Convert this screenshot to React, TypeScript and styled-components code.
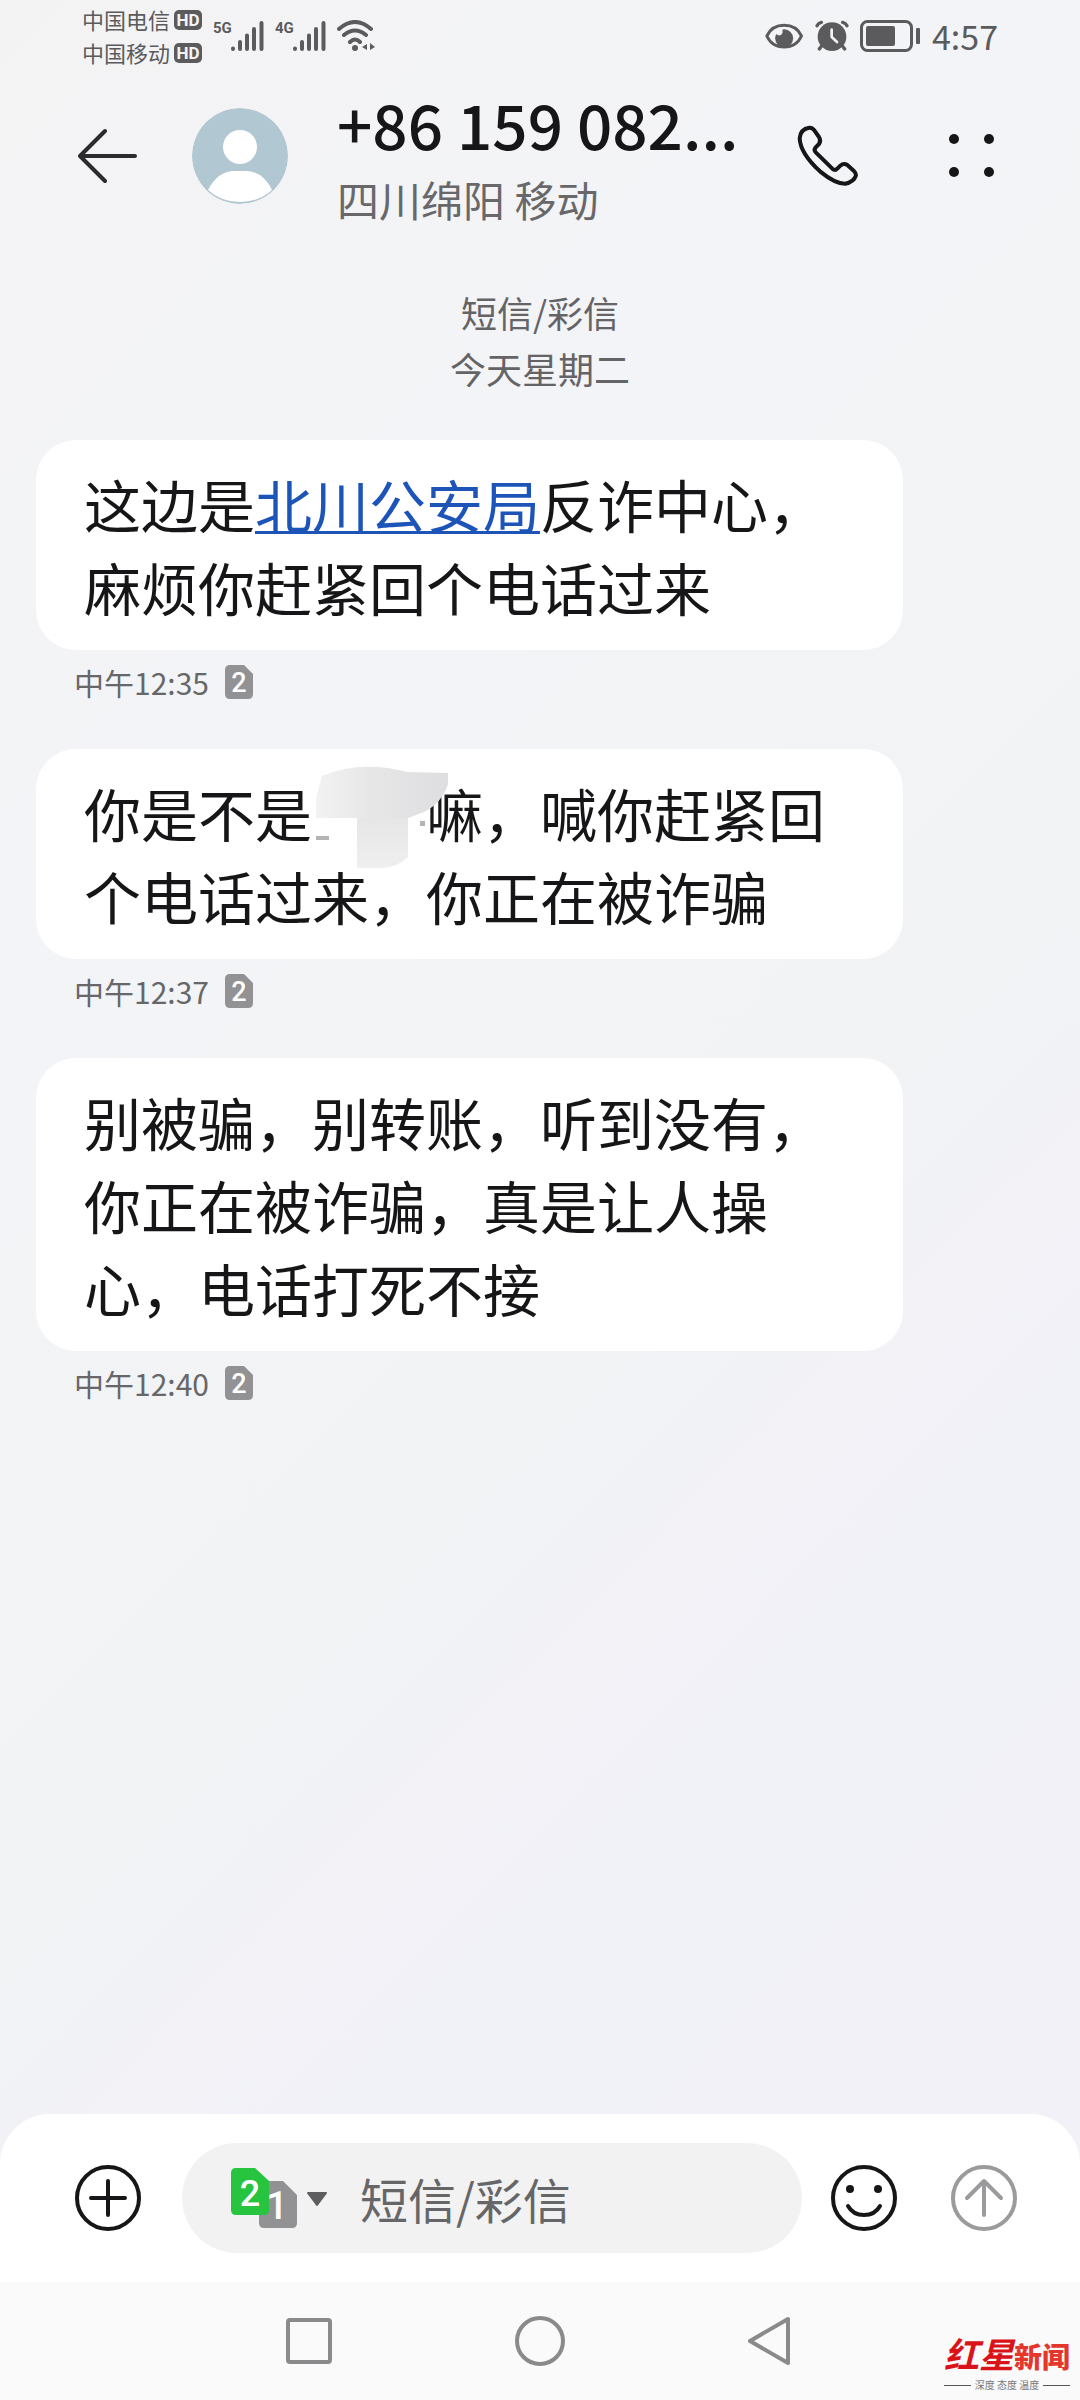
import React from "react";
import styled, { createGlobalStyle } from "styled-components";

const Global = createGlobalStyle`
  *, *::before, *::after { box-sizing: border-box; }
  body {
    margin: 0;
    background: #f3f3f5;
    color: #161618;
    font-family: "Noto Sans CJK SC", "Noto Sans", sans-serif;
  }
  button {
    margin: 0;
    padding: 0;
    border: 0;
    background: none;
    color: inherit;
    font: inherit;
    cursor: pointer;
  }
  svg { display: block; flex: none; }
`;

const Screen = styled.div`
  display: flex;
  flex-direction: column;
  min-height: 100vh;
  background: linear-gradient(135deg, #f3f3f4 0%, #f3f4f7 28%, #f2f3f4 52%, #f1f1f8 72%, #f2f1f7 100%);
`;

const StatusBar = styled.div`
  display: flex;
  justify-content: space-between;
  align-items: center;
  height: 72px;
  padding: 0 82px;
  color: #5b5b5d;
`;

const StatusGroup = styled.div<{ $gap: number }>`
  display: flex;
  align-items: center;
  gap: ${(p) => p.$gap}px;
`;

const Carriers = styled.div`
  display: flex;
  flex-direction: column;
`;

const Carrier = styled.div`
  display: flex;
  align-items: center;
  gap: 4px;
  font-size: 22px;
  line-height: 33px;
`;

const HdBadge = styled.span`
  width: 28px;
  height: 20px;
  border-radius: 5px;
  background: #5b5b5d;
  color: #f4f4f6;
  font: 700 17px/20px Roboto, sans-serif;
  text-align: center;
`;

const Signal = styled.div`
  display: flex;
  align-items: flex-start;
  height: 32px;
`;

const Network = styled.span`
  width: 17px;
  font: 700 15px/16px "Liberation Sans Narrow", Roboto, sans-serif;
`;

const Clock = styled.time`
  font-size: 34px;
  line-height: 40px;
`;

const Header = styled.header`
  display: flex;
  align-items: center;
  height: 168px;
  padding: 0 80px 0 78px;
`;

const IconButton = styled.button`
  display: flex;
  flex: none;
  align-items: center;
  justify-content: center;
`;

const Avatar = styled.div`
  flex: none;
  width: 96px;
  height: 96px;
  margin: 0 49px 0 54px;
  border-radius: 50%;
  overflow: hidden;
`;

const Contact = styled.div`
  flex: 1;
  min-width: 0;
`;

const Number = styled.h1`
  margin: 0;
  font-size: 62px;
  font-weight: 500;
  line-height: 86px;
  white-space: nowrap;
`;

const Region = styled.p`
  margin: 0;
  color: #68686a;
  font-size: 42px;
  line-height: 66px;
`;

const HeaderActions = styled.div`
  display: flex;
  align-items: center;
  gap: 86px;
`;

const Thread = styled.main`
  display: flex;
  flex: 1;
  flex-direction: column;
  padding: 44px 36px;
`;

const DayLabel = styled.div`
  margin-bottom: 44px;
  color: #646466;
  font-size: 36px;
  line-height: 56px;
  text-align: center;
`;

const Message = styled.article`
  width: 86%;
  margin-bottom: 35px;
`;

const Bubble = styled.p`
  margin: 0;
  padding: 22px 48px;
  border-radius: 40px;
  background: #fff;
  font-size: 57px;
  line-height: 83px;
`;

const PhraseLink = styled.a`
  color: #1d54b8;
  text-decoration: underline;
  text-decoration-thickness: 3px;
  text-underline-offset: 3px;
`;

const Redacted = styled.span`
  display: inline-block;
  position: relative;
  width: 114px;
  height: 57px;
  vertical-align: middle;
`;

const Smudge = styled.svg`
  position: absolute;
  left: 4px;
  top: -27px;
`;

const Meta = styled.div`
  display: flex;
  align-items: center;
  gap: 16px;
  height: 64px;
  padding-left: 38px;
  color: #676769;
  font-size: 30px;
`;

const SimText = styled.text`
  font-family: Roboto, sans-serif;
  font-weight: 500;
  fill: #fff;
  text-anchor: middle;
`;

const Composer = styled.form`
  display: flex;
  align-items: center;
  height: 168px;
  padding: 0 62px 0 74px;
  border-radius: 50px 50px 0 0;
  background: #fff;
`;

const Field = styled.div`
  display: flex;
  flex: 1;
  align-items: center;
  min-width: 0;
  height: 110px;
  margin: 0 28px 0 40px;
  padding: 0 48px;
  border-radius: 55px;
  background: #f2f2f2;
`;

const TextBox = styled.input`
  flex: 1;
  min-width: 0;
  margin-left: 30px;
  padding: 0;
  border: 0;
  outline: 0;
  background: none;
  color: #161618;
  font: inherit;
  font-size: 48px;
  line-height: 72px;
  &::placeholder { color: #666668; opacity: 1; }
`;

const ComposerActions = styled.div`
  display: flex;
  gap: 52px;
`;

const NavBar = styled.nav`
  position: relative;
  display: flex;
  align-items: center;
  justify-content: center;
  gap: 167px;
  height: 118px;
  background: #fafafa;
`;

const NavButton = styled(IconButton)`
  width: 64px;
  height: 64px;
`;

const Watermark = styled.div`
  position: absolute;
  right: 10px;
  bottom: 8px;
  width: 126px;
`;

const Brand = styled.div`
  display: flex;
  align-items: baseline;
  justify-content: space-between;
  color: #e5362c;
  font-size: 28px;
  font-weight: 900;
  line-height: 44px;
`;

const BrandScript = styled.span`
  color: #da1219;
  font-size: 35px;
  font-style: italic;
  font-weight: 700;
`;

const Motto = styled.div`
  display: flex;
  align-items: center;
  gap: 4px;
  color: #777;
  font-size: 10px;
  line-height: 14px;
  white-space: nowrap;
  &::before, &::after {
    content: "";
    flex: 1;
    height: 1px;
    background: #555;
  }
`;

function SignalBars() {
  return (
    <svg width="34" height="32" viewBox="0 0 34 32" fill="none" stroke="currentColor" strokeWidth="4" strokeLinecap="round">
      <path d="M3 28.500V29M10 22V29M17 15.500V29M24 9V29M31.500 3V29" />
    </svg>
  );
}

function SimCard({ label }: { label: string }) {
  return (
    <svg width="28" height="34" viewBox="0 0 28 34" role="img" aria-label={"SIM " + label}>
      <path d="M5 0H19L28 9V29Q28 34 23 34H5Q0 34 0 29V5Q0 0 5 0Z" fill="#929294" />
      <SimText x="14" y="27" fontSize="27">{label}</SimText>
    </svg>
  );
}

type MessageItem = { time: string; body: React.ReactNode };

const messages: MessageItem[] = [
  {
    time: "中午12:35",
    body: (
      <>
        这边是<PhraseLink href="#bureau">北川公安局</PhraseLink>反诈中心，麻烦你赶紧回个电话过来
      </>
    ),
  },
  {
    time: "中午12:37",
    body: (
      <>
        你是不是
        <Redacted>
          <Smudge width="134" height="106" viewBox="0 0 134 106" aria-hidden="true">
            <defs>
              <linearGradient id="smudge" x1="0" x2="1">
                <stop offset="0" stopColor="#f2f2f2" />
                <stop offset="0.400" stopColor="#e7e7e8" />
                <stop offset="1" stopColor="#dedee0" />
              </linearGradient>
              <linearGradient id="smudgeTail" x1="0" y1="0" x2="0" y2="1">
                <stop offset="0" stopColor="#e6e6e7" />
                <stop offset="1" stopColor="#efeff0" />
              </linearGradient>
            </defs>
            <path d="M6 10Q45 -6 91 6L132 7V18Q126 37 108 46L92 52H0V32Z" fill="url(#smudge)" />
            <path d="M41 52H92V91Q80 103 62 102H41Z" fill="url(#smudgeTail)" />
            <path d="M0 70H13V74H0ZM104 55h5v5h-5z" fill="#b4b4b6" />
          </Smudge>
        </Redacted>
        嘛，喊你赶紧回个电话过来，你正在被诈骗
      </>
    ),
  },
  {
    time: "中午12:40",
    body: "别被骗，别转账，听到没有，你正在被诈骗，真是让人操心，电话打死不接",
  },
];

export default function App() {
  return (
    <Screen>
      <Global />
      <StatusBar>
        <StatusGroup $gap={11}>
          <Carriers>
            <Carrier>中国电信<HdBadge>HD</HdBadge></Carrier>
            <Carrier>中国移动<HdBadge>HD</HdBadge></Carrier>
          </Carriers>
          <Signal><Network>5G</Network><SignalBars /></Signal>
          <Signal><Network>4G</Network><SignalBars /></Signal>
          <svg width="39" height="32" viewBox="0 0 39 32" fill="none" stroke="currentColor" strokeWidth="4" strokeLinecap="round">
            <path d="M2 9Q18 -5 34 9M7 15Q18 6 29 15M13 22Q18 17 23 22" />
            <circle cx="18" cy="28" r="3" fill="currentColor" stroke="none" />
            <path d="M30 24V30L25 27ZM33 23V30L38 27Z" fill="currentColor" stroke="none" />
          </svg>
        </StatusGroup>
        <StatusGroup $gap={11}>
          <svg width="39" height="28" viewBox="84 66 116 84">
            <path d="M89 108Q104 76 141 76Q178 76 193 108Q178 141 141 141Q104 141 89 108Z" fill="none" stroke="currentColor" strokeWidth="9" strokeLinejoin="round" />
            <circle cx="141" cy="115" r="27" fill="currentColor" />
            <path d="M114 100Q120 86 135 87Q139 100 131 105Q123 109 114 100Z" fill="#f4f4f6" />
          </svg>
          <svg width="34" height="32" viewBox="231 61 102 94" fill="none" stroke="currentColor" strokeWidth="10" strokeLinecap="round">
            <circle cx="282" cy="110" r="43" fill="currentColor" stroke="none" />
            <path d="M237 77Q241 69 250 67M314 67Q323 69 327 77M249 140L244 147M315 140L320 147" />
            <path d="M281 89V111L297 126" stroke="#f4f4f6" strokeWidth="8" />
          </svg>
          <svg width="61" height="32" viewBox="0 0 61 32">
            <rect x="1.500" y="1.500" width="50" height="29" rx="6" fill="none" stroke="currentColor" strokeWidth="3" />
            <rect x="6" y="6" width="29" height="20" rx="2" fill="currentColor" />
            <rect x="56" y="8" width="4" height="16" rx="1" fill="currentColor" />
          </svg>
          <Clock>4:57</Clock>
        </StatusGroup>
      </StatusBar>

      <Header>
        <IconButton aria-label="返回">
          <svg width="60" height="56" viewBox="0 0 60 56" fill="none" stroke="#2b2b2d" strokeWidth="4" strokeLinecap="round" strokeLinejoin="round">
            <path d="M27 3L2 28L27 53M2 28H57" />
          </svg>
        </IconButton>
        <Avatar>
          <svg width="96" height="96" viewBox="0 0 96 96">
            <circle cx="48" cy="48" r="48" fill="#b1c7d2" />
            <circle cx="48" cy="39" r="17" fill="#fff" />
            <path d="M16 82Q26 63 42 63H54Q71 63 80 82Q67 94 48 94Q29 94 16 82Z" fill="#fff" />
          </svg>
        </Avatar>
        <Contact>
          <Number>+86 159 082...</Number>
          <Region>四川绵阳 移动</Region>
        </Contact>
        <HeaderActions>
          <IconButton aria-label="拨打电话">
            <svg width="64" height="64" viewBox="768 132 192 192" fill="none" stroke="#161618" strokeWidth="12" strokeLinejoin="round">
              <path d="M808 143Q781 147 779 175Q781 220 840 274Q885 311 915 311Q941 307 948 286Q948 279 941 272L922 255Q911 248 901 257L892 266Q885 273 877 266L828 218Q820 210 827 202L837 192Q844 182 837 171L823 151Q816 142 808 143Z" />
            </svg>
          </IconButton>
          <IconButton aria-label="更多">
            <svg width="54" height="46" viewBox="0 0 54 46" fill="#161618">
              <circle cx="8" cy="6" r="5" /><circle cx="43" cy="6" r="5" />
              <circle cx="8" cy="39" r="5" /><circle cx="43" cy="39" r="5" />
            </svg>
          </IconButton>
        </HeaderActions>
      </Header>

      <Thread>
        <DayLabel>短信/彩信<br />今天星期二</DayLabel>
        {messages.map((m) => (
          <Message key={m.time}>
            <Bubble>{m.body}</Bubble>
            <Meta><time>{m.time}</time><SimCard label="2" /></Meta>
          </Message>
        ))}
      </Thread>

      <Composer onSubmit={(e) => e.preventDefault()}>
        <IconButton type="button" aria-label="添加附件">
          <svg width="68" height="68" viewBox="0 0 68 68" fill="none" stroke="#161618" strokeWidth="4" strokeLinecap="round">
            <circle cx="34" cy="34" r="31" />
            <path d="M34 17V51M17 34H51" />
          </svg>
        </IconButton>
        <Field>
          <IconButton type="button" aria-label="选择 SIM 卡">
            <svg width="100" height="62" viewBox="0 0 100 62">
              <path d="M34 14H53L67 28V56Q67 61 62 61H34Q29 61 29 56V19Q29 14 34 14Z" fill="#929294" />
              <path d="M6 1H25L39 14V43Q39 48 34 48H6Q1 48 1 43V6Q1 1 6 1Z" fill="#27c440" />
              <SimText x="20" y="39" fontSize="36">2</SimText>
              <SimText x="47" y="52" fontSize="38">1</SimText>
              <path d="M78 26H96L87 38Z" fill="#5e5e60" stroke="#5e5e60" strokeWidth="2" strokeLinejoin="round" />
            </svg>
          </IconButton>
          <TextBox type="text" aria-label="短信内容" placeholder="短信/彩信" />
        </Field>
        <ComposerActions>
          <IconButton type="button" aria-label="表情">
            <svg width="68" height="68" viewBox="0 0 68 68" fill="none" stroke="#161618" strokeWidth="4" strokeLinecap="round">
              <circle cx="34" cy="34" r="31" />
              <path d="M18 42Q23 51 34 51Q45 51 50 42" />
              <circle cx="20" cy="25" r="4" fill="#161618" stroke="none" />
              <circle cx="48" cy="25" r="4" fill="#161618" stroke="none" />
            </svg>
          </IconButton>
          <IconButton type="submit" aria-label="发送">
            <svg width="68" height="68" viewBox="0 0 68 68" fill="none" stroke="#9b9b9d" strokeWidth="4" strokeLinecap="round" strokeLinejoin="round">
              <circle cx="34" cy="34" r="31" />
              <path d="M34 51V17M17 34L34 17L51 34" />
            </svg>
          </IconButton>
        </ComposerActions>
      </Composer>

      <NavBar>
        <NavButton aria-label="最近任务">
          <svg width="46" height="46" viewBox="0 0 46 46" fill="none" stroke="#8a8a8c" strokeWidth="4">
            <rect x="2" y="2" width="42" height="42" rx="2" />
          </svg>
        </NavButton>
        <NavButton aria-label="主屏幕">
          <svg width="50" height="50" viewBox="0 0 50 50" fill="none" stroke="#8a8a8c" strokeWidth="4">
            <circle cx="25" cy="25" r="23" />
          </svg>
        </NavButton>
        <NavButton aria-label="返回上一级">
          <svg width="48" height="50" viewBox="0 0 48 50" fill="none" stroke="#8a8a8c" strokeWidth="4" strokeLinejoin="round">
            <path d="M41 3V47L3 25Z" />
          </svg>
        </NavButton>
        <Watermark>
          <Brand><BrandScript>红星</BrandScript>新闻</Brand>
          <Motto>深度 态度 温度</Motto>
        </Watermark>
      </NavBar>
    </Screen>
  );
}
